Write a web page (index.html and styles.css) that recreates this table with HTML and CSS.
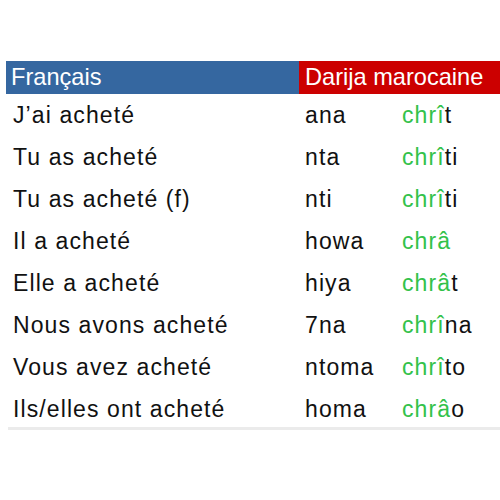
FILE: index.html
```html
<!DOCTYPE html>
<html lang="fr">
<head>
<meta charset="utf-8">
<link rel="stylesheet" href="styles.css">
</head>
<body>
<div class="table">
  <div class="head head-fr">Français</div>
  <div class="head head-da">Darija marocaine</div>

  <div class="fr">J’ai acheté</div><div class="pr">ana</div><div class="vb"><span class="g">chrî</span>t</div>
  <div class="fr">Tu as acheté</div><div class="pr">nta</div><div class="vb"><span class="g">chrî</span>ti</div>
  <div class="fr">Tu as acheté (f)</div><div class="pr">nti</div><div class="vb"><span class="g">chrî</span>ti</div>
  <div class="fr">Il a acheté</div><div class="pr">howa</div><div class="vb"><span class="g">chrâ</span></div>
  <div class="fr">Elle a acheté</div><div class="pr">hiya</div><div class="vb"><span class="g">chrâ</span>t</div>
  <div class="fr">Nous avons acheté</div><div class="pr">7na</div><div class="vb"><span class="g">chrî</span>na</div>
  <div class="fr">Vous avez acheté</div><div class="pr">ntoma</div><div class="vb"><span class="g">chrî</span>to</div>
  <div class="fr">Ils/elles ont acheté</div><div class="pr">homa</div><div class="vb"><span class="g">chrâ</span>o</div>
</div>
<div class="rule"></div>
</body>
</html>
```
FILE: styles.css
```css
html, body {
  margin: 0;
  padding: 0;
  background: #ffffff;
}
body {
  font-family: "Liberation Sans", Arial, sans-serif;
  font-size: 23px;
  color: #111111;
}
.table {
  margin: 61px 0 0 6px;
  display: grid;
  grid-template-columns: 293px 103px 1fr;
  grid-template-rows: 33px;
  grid-auto-rows: 42px;
}
.head {
  color: #ffffff;
  display: flex;
  align-items: center;
  line-height: 1;
  font-size: 23.6px;
}
.head-fr {
  background: #3567a0;
  padding-left: 5px;
}
.head-da {
  background: #cc0000;
  grid-column: 2 / 4;
  padding-left: 6px;
}
.fr, .pr, .vb {
  display: flex;
  align-items: center;
  line-height: 1;
  letter-spacing: 1.1px;
}
.fr { padding-left: 7px; }
.pr { padding-left: 6px; }
.vb { padding-left: 0; }
.g { color: #33c24a; }
.rule {
  margin: -3px 0 0 8px;
  height: 3px;
  background: #ebebeb;
}
```
